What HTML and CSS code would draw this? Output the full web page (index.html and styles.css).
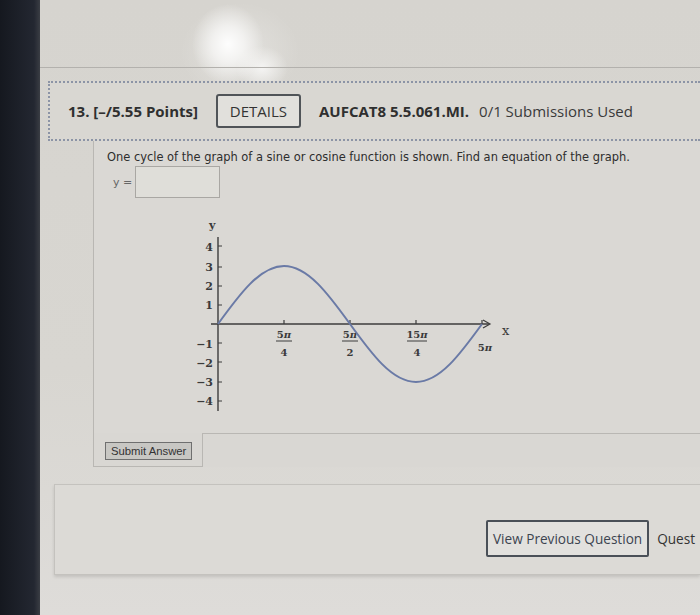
FILE: index.html
```html
<!DOCTYPE html>
<html>
<head>
<meta charset="utf-8">
<link rel="stylesheet" href="styles.css">
</head>
<body>
<div class="device">
  <div class="bezel"></div>
  <div class="screen">
    <div class="topbar"></div>
    <div class="question">
      <div class="qhead">
        <span class="points">13. [–/5.55 Points]</span>
        <span class="details">DETAILS</span>
        <span class="code">AUFCAT8 5.5.061.MI.</span>
        <span class="subs">0/1 Submissions Used</span>
      </div>
      <div class="qbody">
        <div class="qinner">
          <p class="prompt">One cycle of the graph of a sine or cosine function is shown. Find an equation of the graph.</p>
          <div class="answer-row">
            <span class="yeq">y =</span>
            <span class="answer-box"></span>
          </div>
          <svg class="graph" width="320" height="200" viewBox="0 0 320 200">
            <g font-family="DejaVu Serif, serif" font-weight="bold" fill="#3a3a3a" font-size="11">
              <text x="14" y="14">y</text>
              <text x="18" y="36" text-anchor="end">4</text>
              <text x="18" y="56" text-anchor="end">3</text>
              <text x="18" y="75" text-anchor="end">2</text>
              <text x="18" y="94" text-anchor="end">1</text>
              <text x="18" y="133" text-anchor="end">−1</text>
              <text x="18" y="152" text-anchor="end">−2</text>
              <text x="18" y="171" text-anchor="end">−3</text>
              <text x="18" y="190" text-anchor="end">−4</text>
              <text x="89" y="123" text-anchor="middle" font-size="10">5<tspan font-style="italic">π</tspan></text>
              <text x="89" y="141" text-anchor="middle" font-size="10">4</text>
              <text x="155" y="123" text-anchor="middle" font-size="10">5<tspan font-style="italic">π</tspan></text>
              <text x="155" y="141" text-anchor="middle" font-size="10">2</text>
              <text x="222" y="123" text-anchor="middle" font-size="10">15<tspan font-style="italic">π</tspan></text>
              <text x="222" y="141" text-anchor="middle" font-size="10">4</text>
              <text x="290" y="136" text-anchor="middle" font-size="10">5<tspan font-style="italic">π</tspan></text>
              <text x="307" y="120" font-weight="normal" font-size="13">x</text>
            </g>
            <g stroke="#3d3d3d" fill="none">
              <line x1="23" y1="22" x2="23" y2="196" stroke-width="1.4"/>
              <line x1="16" y1="109" x2="294" y2="109" stroke-width="1.4"/>
              <path d="M288,105 L295,109 L288,113" stroke-width="1.2"/>
              <path d="M23,31 h4 M23,52 h4 M23,71 h4 M23,90 h4 M23,128 h4 M23,147 h4 M23,167 h4 M23,186 h4" stroke-width="1.2"/>
              <path d="M89,109 v-4 M155,109 v-4 M221,109 v-4 M287,109 v-4" stroke-width="1.2"/>
              <path d="M81,126 h16 M147,126 h16 M212,126 h20" stroke-width="1"/>
            </g>
            <path d="M23,109 C44.5,79.3 65.1,51 89,51 S133.5,79.3 155,109 S197.1,167 221,167 S265.5,138.7 287,109" stroke="#6a7aa6" stroke-width="2" fill="none"/>
          </svg>
        </div>
        <div class="submit-row">
          <div class="submit-tab"><span class="submit-btn">Submit Answer</span></div>
          <div class="tab-rest"></div>
        </div>
      </div>
    </div>
    <div class="nav-panel">
      <span class="prev-btn">View Previous Question</span>
      <span class="quest">Quest</span>
    </div>
  </div>
</div>
</body>
</html>
```

FILE: styles.css
```css
html, body {
  margin: 0;
  padding: 0;
  width: 700px;
  height: 615px;
  overflow: hidden;
}
.device {
  display: flex;
  width: 700px;
  height: 615px;
}
.bezel {
  width: 40px;
  flex: none;
  background: linear-gradient(90deg, #15181f 0%, #232731 85%, #3a3d44 100%);
}
.screen {
  flex: 1;
  min-width: 0;
  display: flex;
  flex-direction: column;
  background:
    radial-gradient(ellipse 36px 40px at 188px 44px, rgba(255,255,255,0.95) 0%, rgba(255,255,255,0.6) 45%, rgba(255,255,255,0) 100%),
    radial-gradient(ellipse 26px 22px at 222px 68px, rgba(255,255,255,0.7) 0%, rgba(255,255,255,0) 100%),
    radial-gradient(ellipse 60px 50px at 200px 52px, rgba(255,255,255,0.3) 0%, rgba(255,255,255,0) 100%),
    linear-gradient(180deg, #d6d4cf 0%, #d8d6d1 60%, #dedcd9 100%);
  font-family: "Open Sans", "Liberation Sans", sans-serif;
  color: #333;
}
.topbar {
  height: 67px;
  flex: none;
  border-bottom: 1px solid #b3b1ad;
}
.question {
  margin: 13px 0 0 8px;
  display: flex;
  flex-direction: column;
}
.qhead {
  height: 56px;
  border: 2px dotted #8c94a6;
  border-right: none;
  background: #d9d7d2;
  display: flex;
  align-items: center;
  padding-left: 18px;
  font-size: 15px;
  white-space: nowrap;
}
.points {
  font-weight: bold;
  color: #2f2f2f;
}
.details {
  margin-left: 18px;
  width: 81px;
  height: 30px;
  box-sizing: content-box;
  border: 2px solid #505458;
  border-radius: 3px;
  background: #e1e0dc;
  display: flex;
  align-items: center;
  justify-content: center;
  color: #333;
}
.code {
  margin-left: 18px;
  font-weight: bold;
  color: #2f2f2f;
}
.subs {
  margin-left: 10px;
  color: #3a3a3a;
}
.qbody {
  margin-left: 45px;
  border-left: 1px solid #b9b7b3;
  background: #dad8d4;
}
.qinner {
  padding: 9px 0 0 13px;
}
.prompt {
  margin: 0;
  font-family: "DejaVu Sans", Verdana, sans-serif;
  font-size: 11.45px;
  line-height: 14px;
  color: #2e2e2e;
}
.answer-row {
  display: flex;
  align-items: center;
  margin-top: 2px;
}
.yeq {
  margin-left: 6px;
  width: 22px;
  font-family: "DejaVu Sans", Verdana, sans-serif;
  font-size: 11px;
  color: #666;
}
.answer-box {
  width: 83px;
  height: 30px;
  border: 1px solid #a9a7a3;
  background: #dfded9;
}
.graph {
  display: block;
  margin: 17px 0 0 88px;
}
.submit-row {
  display: flex;
  margin-top: 18px;
}
.submit-tab {
  width: 109px;
  height: 34px;
  border-right: 1px solid #b9b7b3;
  border-bottom: 1px solid #b9b7b3;
  display: flex;
  align-items: center;
  padding-left: 11px;
  box-sizing: border-box;
  background: #d9d7d3;
}
.submit-btn {
  font-family: "Liberation Sans", Arial, sans-serif;
  font-size: 11.3px;
  color: #333;
  background: #c8c7c3;
  border: 1px solid #6f6f6f;
  padding: 2px 5px;
  margin-top: 2px;
}
.tab-rest {
  flex: 1;
  border-top: 1px solid #b9b7b3;
  background: #d9d7d3;
}
.nav-panel {
  margin: 17px 0 0 14px;
  height: 91px;
  box-sizing: border-box;
  border: 1px solid #c4c2be;
  border-right: none;
  background: #dcdad6;
  box-shadow: 0 2px 3px rgba(0,0,0,0.12);
  display: flex;
  align-items: center;
  padding: 18px 0 0 431px;
  white-space: nowrap;
  font-size: 13.6px;
}
.prev-btn {
  border: 2px solid #4a5058;
  border-radius: 2px;
  padding: 7px 5px 7px 5px;
  color: #3c4450;
  background: #e2e1de;
}
.quest {
  margin-left: 8px;
  color: #333;
}
```
